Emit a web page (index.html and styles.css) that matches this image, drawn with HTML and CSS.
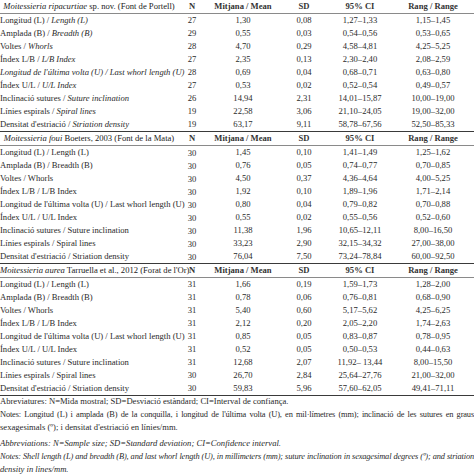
FILE: index.html
```html
<!DOCTYPE html>
<html>
<head>
<meta charset="utf-8">
<link rel="stylesheet" href="styles.css">
</head>
<body>
<div class="sheet">
  <section class="sec first">
    <div class="row head">
      <div class="lab"><i>Moitessieria ripacurtiae</i> sp. nov. (Font de Portell)</div>
      <div>N</div><div class="mean">Mitjana / Mean</div><div>SD</div><div>95% CI</div><div>Rang / Range</div>
    </div>
    <div class="row"><div class="lab">Longitud (L) / <i>Length (L)</i></div><div>27</div><div class="mean">1,30</div><div>0,08</div><div>1,27–1,33</div><div>1,15–1,45</div></div>
    <div class="row"><div class="lab">Amplada (B) / <i>Breadth (B)</i></div><div>29</div><div class="mean">0,55</div><div>0,03</div><div>0,54–0,56</div><div>0,53–0,65</div></div>
    <div class="row"><div class="lab">Voltes / <i>Whorls</i></div><div>28</div><div class="mean">4,70</div><div>0,29</div><div>4,58–4,81</div><div>4,25–5,25</div></div>
    <div class="row"><div class="lab">Índex L/B / <i>L/B Index</i></div><div>27</div><div class="mean">2,35</div><div>0,13</div><div>2,30–2,40</div><div>2,08–2,59</div></div>
    <div class="row"><div class="lab"><i>Longitud de l'última volta (U) / Last whorl length (U)</i></div><div>28</div><div class="mean">0,69</div><div>0,04</div><div>0,68–0,71</div><div>0,63–0,80</div></div>
    <div class="row"><div class="lab">Índex U/L / <i>U/L Index</i></div><div>27</div><div class="mean">0,53</div><div>0,02</div><div>0,52–0,54</div><div>0,49–0,57</div></div>
    <div class="row"><div class="lab">Inclinació sutures / <i>Suture inclination</i></div><div>26</div><div class="mean">14,94</div><div>2,31</div><div>14,01–15,87</div><div>10,00–19,00</div></div>
    <div class="row"><div class="lab">Línies espirals / <i>Spiral lines</i></div><div>19</div><div class="mean">22,58</div><div>3,06</div><div>21,10–24,05</div><div>19,00–32,00</div></div>
    <div class="row"><div class="lab">Densitat d'estriació / <i>Striation density</i></div><div>19</div><div class="mean">63,17</div><div>9,11</div><div>58,78–67,56</div><div>52,50–85,33</div></div>
  </section>
  <section class="sec">
    <div class="row head">
      <div class="lab"><i>Moitessieria foui</i> Boeters, 2003 (Font de la Mata)</div>
      <div>N</div><div class="mean">Mitjana / Mean</div><div>SD</div><div>95% CI</div><div>Rang / Range</div>
    </div>
    <div class="row"><div class="lab">Longitud (L) / Length (L)</div><div class="os">30</div><div class="mean">1,45</div><div>0,10</div><div>1,41–1,49</div><div>1,25–1,62</div></div>
    <div class="row"><div class="lab">Amplada (B) / Breadth (B)</div><div class="os">30</div><div class="mean">0,76</div><div>0,05</div><div>0,74–0,77</div><div>0,70–0,85</div></div>
    <div class="row"><div class="lab">Voltes / Whorls</div><div class="os">30</div><div class="mean">4,50</div><div>0,37</div><div>4,36–4,64</div><div>4,00–5,25</div></div>
    <div class="row"><div class="lab">Índex L/B / L/B Index</div><div class="os">30</div><div class="mean">1,92</div><div>0,10</div><div>1,89–1,96</div><div>1,71–2,14</div></div>
    <div class="row"><div class="lab">Longitud de l'última volta (U) / Last whorl length (U)</div><div class="os">30</div><div class="mean">0,80</div><div>0,04</div><div>0,79–0,82</div><div>0,70–0,88</div></div>
    <div class="row"><div class="lab">Índex U/L / U/L Index</div><div class="os">30</div><div class="mean">0,55</div><div>0,02</div><div>0,55–0,56</div><div>0,52–0,60</div></div>
    <div class="row"><div class="lab">Inclinació sutures / Suture inclination</div><div class="os">30</div><div class="mean">11,38</div><div>1,96</div><div>10,65–12,11</div><div>8,00–16,50</div></div>
    <div class="row"><div class="lab">Línies espirals / Spiral lines</div><div class="os">30</div><div class="mean">33,23</div><div>2,90</div><div>32,15–34,32</div><div>27,00–38,00</div></div>
    <div class="row"><div class="lab">Densitat d'estriació / Striation density</div><div class="os">30</div><div class="mean">76,04</div><div>7,50</div><div>73,24–78,84</div><div>60,00–92,50</div></div>
  </section>
  <section class="sec last">
    <div class="row head">
      <div class="lab"><i>Moitessieria aurea</i> Tarruella et al., 2012 (Forat de l'Or)</div>
      <div>N</div><div class="mean">Mitjana / Mean</div><div>SD</div><div>95% CI</div><div>Rang / Range</div>
    </div>
    <div class="row"><div class="lab">Longitud (L) / Length (L)</div><div>31</div><div class="mean">1,66</div><div>0,19</div><div>1,59–1,73</div><div>1,28–2,00</div></div>
    <div class="row"><div class="lab">Amplada (B) / Breadth (B)</div><div>31</div><div class="mean">0,78</div><div>0,06</div><div>0,76–0,81</div><div>0,68–0,90</div></div>
    <div class="row"><div class="lab">Voltes / Whorls</div><div>31</div><div class="mean">5,40</div><div>0,60</div><div>5,17–5,62</div><div>4,25–6,25</div></div>
    <div class="row"><div class="lab">Índex L/B / L/B Index</div><div>31</div><div class="mean">2,12</div><div>0,20</div><div>2,05–2,20</div><div>1,74–2,63</div></div>
    <div class="row"><div class="lab">Longitud de l'última volta (U) / Last whorl length (U)</div><div>31</div><div class="mean">0,85</div><div>0,05</div><div>0,83–0,87</div><div>0,78–0,95</div></div>
    <div class="row"><div class="lab">Índex U/L / U/L Index</div><div>31</div><div class="mean">0,52</div><div>0,05</div><div>0,50–0,53</div><div>0,44–0,63</div></div>
    <div class="row"><div class="lab">Inclinació sutures / Suture inclination</div><div>31</div><div class="mean">12,68</div><div>2,07</div><div>11,92– 13,44</div><div>8,00–15,50</div></div>
    <div class="row"><div class="lab">Línies espirals / Spiral lines</div><div>30</div><div class="mean">26,70</div><div>2,84</div><div>25,64–27,76</div><div>21,00–32,00</div></div>
    <div class="row"><div class="lab">Densitat d'estriació / Striation density</div><div>30</div><div class="mean">59,83</div><div>5,96</div><div>57,60–62,05</div><div>49,41–71,11</div></div>
  </section>
  <div class="notes">
    <p class="line">Abreviatures: N=Mida mostral; SD=Desviació estàndard; CI=Interval de confiança.</p>
    <p class="line just">Notes: Longitud (L) i amplada (B) de la conquilla, i longitud de l'última volta (U), en mil·límetres (mm); inclinació de les sutures en graus</p>
    <p class="line">sexagesimals (º); i densitat d'estriació en línies/mm.</p>
    <p class="line en gap">Abbreviations: N=Sample size; SD=Standard deviation; CI=Confidence interval.</p>
    <p class="line en just">Notes: Shell length (L) and breadth (B), and last whorl length (U), in millimeters (mm); suture inclination in sexagesimal degrees (º); and striation</p>
    <p class="line en">density in lines/mm.</p>
  </div>
</div>
</body>
</html>
```

FILE: styles.css
```css
html, body {
  margin: 0;
  padding: 0;
  background: #ffffff;
}
body {
  width: 474px;
  height: 474px;
  overflow: hidden;
  font-family: "Liberation Serif", "Times New Roman", serif;
  font-size: 8.6px;
  color: #2a2a2a;
}
.sheet {
  width: 474px;
}
.sec + .sec {
  border-top: 1px solid #3a3a3a;
}
.sec.last {
  border-bottom: 1px solid #3a3a3a;
}
.row {
  display: grid;
  grid-template-columns: 178px 28px 74px 48px 64px 82px;
  height: 13px;
  line-height: 13px;
  white-space: nowrap;
}
.row > div {
  text-align: center;
}
.row > .lab {
  text-align: left;
}
.head {
  border-bottom: 1px solid #8a8a8a;
  font-weight: bold;
  color: #333;
}
.head > .lab {
  text-align: center;
  font-weight: normal;
  color: #222;
}
.os {
  position: relative;
  top: 1px;
}
.notes {
  width: 474px;
  margin-top: -1px;
}
.line {
  margin: 0;
  height: 13px;
  line-height: 13px;
  white-space: nowrap;
}
.line.just {
  text-align: justify;
  text-align-last: justify;
  white-space: normal;
  font-size: 8.4px;
  letter-spacing: -0.15px;
}
.line.en {
  font-style: italic;
}
.line.gap {
  margin-top: 3px;
}
```
